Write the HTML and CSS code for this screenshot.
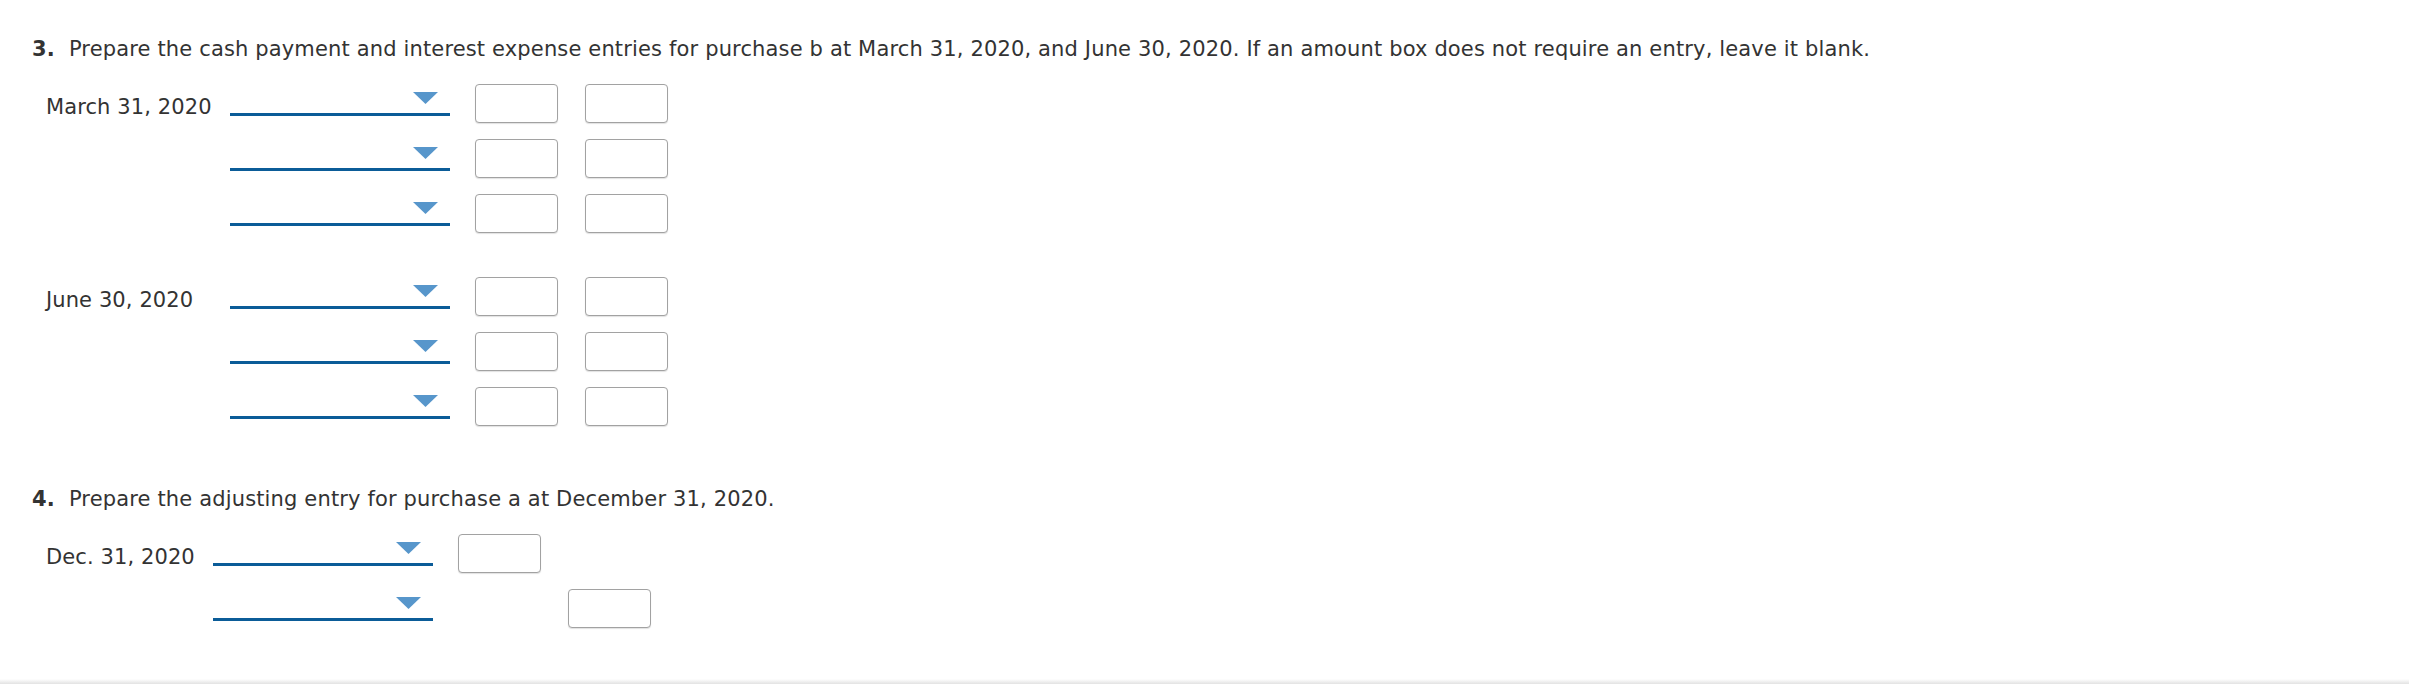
FILE: index.html
```html
<!DOCTYPE html>
<html lang="en">
<head>
<meta charset="utf-8">
<title>Journal entries</title>
<link rel="stylesheet" href="styles.css">
</head>
<body>
<div class="page">
  <section class="part part-3">
    <p class="question"><strong class="num">3.</strong>Prepare the cash payment and interest expense entries for purchase b at March 31, 2020, and June 30, 2020. If an amount box does not require an entry, leave it blank.</p>
    <div class="entries entries-3">
      <div class="label">March 31, 2020</div>
      <div class="dd"><svg class="caret" width="25" height="12" viewBox="0 0 25 12"><polygon points="0,0 25,0 12.5,12" fill="#5796cb"/></svg></div>
      <div class="amt dr"></div>
      <div class="amt cr"></div>

      <div class="label"></div>
      <div class="dd"><svg class="caret" width="25" height="12" viewBox="0 0 25 12"><polygon points="0,0 25,0 12.5,12" fill="#5796cb"/></svg></div>
      <div class="amt dr"></div>
      <div class="amt cr"></div>

      <div class="label"></div>
      <div class="dd"><svg class="caret" width="25" height="12" viewBox="0 0 25 12"><polygon points="0,0 25,0 12.5,12" fill="#5796cb"/></svg></div>
      <div class="amt dr"></div>
      <div class="amt cr"></div>

      <div class="spacer"></div>

      <div class="label">June 30, 2020</div>
      <div class="dd"><svg class="caret" width="25" height="12" viewBox="0 0 25 12"><polygon points="0,0 25,0 12.5,12" fill="#5796cb"/></svg></div>
      <div class="amt dr"></div>
      <div class="amt cr"></div>

      <div class="label"></div>
      <div class="dd"><svg class="caret" width="25" height="12" viewBox="0 0 25 12"><polygon points="0,0 25,0 12.5,12" fill="#5796cb"/></svg></div>
      <div class="amt dr"></div>
      <div class="amt cr"></div>

      <div class="label"></div>
      <div class="dd"><svg class="caret" width="25" height="12" viewBox="0 0 25 12"><polygon points="0,0 25,0 12.5,12" fill="#5796cb"/></svg></div>
      <div class="amt dr"></div>
      <div class="amt cr"></div>
    </div>
  </section>

  <section class="part part-4">
    <p class="question"><strong class="num">4.</strong>Prepare the adjusting entry for purchase a at December 31, 2020.</p>
    <div class="entries entries-4">
      <div class="label">Dec. 31, 2020</div>
      <div class="dd"><svg class="caret" width="25" height="12" viewBox="0 0 25 12"><polygon points="0,0 25,0 12.5,12" fill="#5796cb"/></svg></div>
      <div class="amt dr"></div>
      <div class="empty"></div>

      <div class="label"></div>
      <div class="dd"><svg class="caret" width="25" height="12" viewBox="0 0 25 12"><polygon points="0,0 25,0 12.5,12" fill="#5796cb"/></svg></div>
      <div class="empty"></div>
      <div class="amt cr"></div>
    </div>
  </section>
  <div class="bottom-shadow"></div>
</div>
</body>
</html>
```

FILE: styles.css
```css
html, body {
  margin: 0;
  padding: 0;
  background: #ffffff;
}

body {
  font-family: "DejaVu Sans", Verdana, sans-serif;
  font-size: 21px;
  line-height: 24px;
  color: #333333;
}

.page {
  height: 684px;
  display: flex;
  flex-direction: column;
  box-sizing: border-box;
  padding-top: 37px;
}

.part {
  padding-left: 32px;
}

.part-4 {
  margin-top: 45px;
}

.question {
  margin: 0;
  white-space: nowrap;
  letter-spacing: 0.15px;
}

.num {
  font-weight: bold;
  margin-right: 14px;
}

.entries {
  display: grid;
  grid-template-columns: max-content 220px 108px 110px;
  margin-top: 23px;
  padding-left: 14px;
}

.entries-3 {
  grid-template-rows: repeat(3, 55px) 28px repeat(3, 55px);
}

.entries-4 {
  grid-template-rows: repeat(2, 55px);
}

.spacer {
  grid-column: 1 / -1;
}

.label {
  padding-top: 11px;
  padding-right: 18px;
  white-space: nowrap;
  letter-spacing: 0.1px;
}

.dd {
  height: 32px;
  box-sizing: border-box;
  border-bottom: 3px solid #0b5c98;
  display: flex;
  justify-content: flex-end;
  align-items: flex-start;
  padding: 8px 12px 0 0;
}

.caret {
  display: block;
}

.amt {
  justify-self: end;
  width: 83px;
  height: 39px;
  box-sizing: border-box;
  border: 1px solid #a2a2a2;
  border-radius: 4px;
  background: #ffffff;
  box-shadow: 0 1px 1px rgba(0, 0, 0, 0.12);
}

.bottom-shadow {
  margin-top: auto;
  height: 5px;
  background: linear-gradient(#ffffff, #e2e2e2);
}
```
